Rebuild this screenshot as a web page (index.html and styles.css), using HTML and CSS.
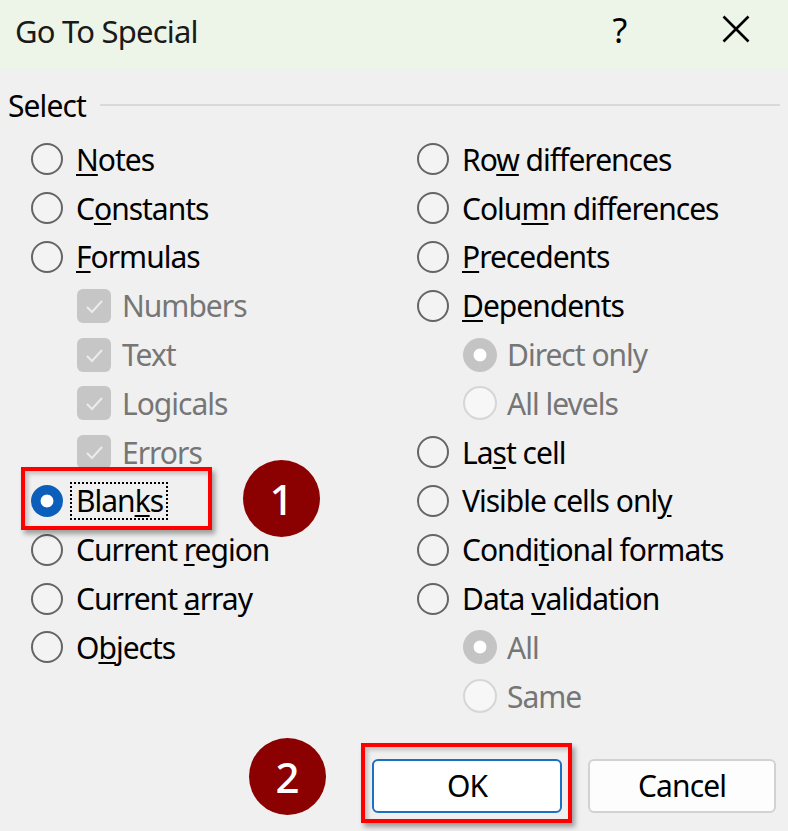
FILE: index.html
```html
<!DOCTYPE html>
<html lang="en">
<head>
<meta charset="utf-8">
<title>Go To Special</title>
<link rel="stylesheet" href="styles.css">
</head>
<body>
<div class="dialog">
  <div class="titlebar">
    <span class="title">Go To Special</span>
    <span class="help">?</span>
    <svg class="close" width="28" height="28" viewBox="0 0 28 28"><path d="M1.5 1.5 L26.5 26.5 M26.5 1.5 L1.5 26.5" stroke="#000" stroke-width="2.6" fill="none"/></svg>
  </div>
  <div class="content">
    <div class="group-head"><span>Select</span><div class="rule"></div></div>
    <div class="columns">
      <div class="col left">
        <div class="row"><span class="radio"></span><span><u>N</u>otes</span></div>
        <div class="row"><span class="radio"></span><span>C<u>o</u>nstants</span></div>
        <div class="row"><span class="radio"></span><span><u>F</u>ormulas</span></div>
        <div class="row sub dis"><span class="check"><svg width="34" height="34" viewBox="0 0 34 34"><path d="M10 18 L15 23 L25 12" stroke="#ececec" stroke-width="2" fill="none"/></svg></span><span>Numbers</span></div>
        <div class="row sub dis"><span class="check"><svg width="34" height="34" viewBox="0 0 34 34"><path d="M10 18 L15 23 L25 12" stroke="#ececec" stroke-width="2" fill="none"/></svg></span><span>Text</span></div>
        <div class="row sub dis"><span class="check"><svg width="34" height="34" viewBox="0 0 34 34"><path d="M10 18 L15 23 L25 12" stroke="#ececec" stroke-width="2" fill="none"/></svg></span><span>Logicals</span></div>
        <div class="row sub dis"><span class="check"><svg width="34" height="34" viewBox="0 0 34 34"><path d="M10 18 L15 23 L25 12" stroke="#ececec" stroke-width="2" fill="none"/></svg></span><span>Errors</span></div>
        <div class="row"><span class="radio on"></span><span class="focus">Blan<u>k</u>s</span></div>
        <div class="row"><span class="radio"></span><span>Current <u>r</u>egion</span></div>
        <div class="row"><span class="radio"></span><span>Current <u>a</u>rray</span></div>
        <div class="row"><span class="radio"></span><span>O<u>b</u>jects</span></div>
      </div>
      <div class="col right">
        <div class="row"><span class="radio"></span><span>Ro<u>w</u> differences</span></div>
        <div class="row"><span class="radio"></span><span>Colu<u>m</u>n differences</span></div>
        <div class="row"><span class="radio"></span><span><u>P</u>recedents</span></div>
        <div class="row"><span class="radio"></span><span><u>D</u>ependents</span></div>
        <div class="row sub dis"><span class="radio dis-on"></span><span>Direct only</span></div>
        <div class="row sub dis"><span class="radio dis-off"></span><span>All levels</span></div>
        <div class="row"><span class="radio"></span><span>La<u>s</u>t cell</span></div>
        <div class="row"><span class="radio"></span><span>Visible cells onl<u>y</u></span></div>
        <div class="row"><span class="radio"></span><span>Condi<u>t</u>ional formats</span></div>
        <div class="row"><span class="radio"></span><span>Data <u>v</u>alidation</span></div>
        <div class="row sub dis"><span class="radio dis-on"></span><span>All</span></div>
        <div class="row sub dis"><span class="radio dis-off"></span><span>Same</span></div>
      </div>
    </div>
    <div class="buttons">
      <div class="btn primary">OK</div>
      <div class="btn cancel">Cancel</div>
    </div>
  </div>
  <div class="hl hl-blanks"></div>
  <div class="hl hl-ok"></div>
  <div class="badge badge-1">1</div>
  <div class="badge badge-2">2</div>
</div>
</body>
</html>
```

FILE: styles.css
```css
* { box-sizing: border-box; }

body {
  margin: 0;
  background: #f0f0f0;
  font-family: "Noto Sans", "Open Sans", sans-serif;
  color: #000;
}

.dialog {
  position: relative;
  width: 788px;
  height: 831px;
  overflow: hidden;
}

.titlebar {
  height: 70px;
  background: #edf5e8;
  display: flex;
  align-items: center;
  padding-left: 15px;
}

.title {
  flex: 1;
  font-size: 31px;
  letter-spacing: -0.8px;
  line-height: 1;
  margin-top: -8px;
  color: #1a1a1a;
}

.help {
  width: 16px;
  text-align: center;
  font-size: 34px;
  line-height: 1;
  margin-top: -10px;
}

.close {
  margin-left: 94px;
  margin-right: 38px;
  margin-top: -13px;
  flex: none;
}

.content {
  padding-top: 15px;
}

.group-head {
  display: flex;
  align-items: center;
  height: 40px;
  padding-left: 8px;
  font-size: 30px;
  letter-spacing: -0.9px;
}

.group-head .rule {
  flex: 1;
  height: 2px;
  background: #d9d9d9;
  margin-left: 14px;
  margin-right: 8px;
}

.columns {
  display: flex;
  margin-top: 10px;
}

.col.left {
  width: 417px;
  padding-left: 31px;
}

.col.right {
  flex: 1;
}

.row {
  display: flex;
  align-items: center;
  height: 48.8px;
  font-size: 30px;
  letter-spacing: -1px;
  white-space: nowrap;
}

.row.sub {
  padding-left: 46px;
}

.row.dis {
  color: #767676;
}

u {
  text-decoration-thickness: 2px;
  text-underline-offset: 3px;
}

.radio {
  flex: none;
  width: 32px;
  height: 32px;
  border-radius: 50%;
  border: 2.5px solid #656565;
  background: #f3f3f3;
  margin-right: 13px;
}

.radio.on {
  border: none;
  background: radial-gradient(circle, #ffffff 0 6px, #0b5fba 6.8px);
}

.radio.dis-on {
  width: 34px;
  height: 34px;
  border: none;
  background: radial-gradient(circle, #ffffff 0 6px, #c4c4c4 6.8px);
  margin-right: 10px;
}

.radio.dis-off {
  width: 34px;
  height: 34px;
  border: 2px solid #d6d6d6;
  background: #f7f7f7;
  margin-right: 10px;
}

.check {
  flex: none;
  width: 34px;
  height: 34px;
  border-radius: 6px;
  background: #c6c6c6;
  margin-right: 11px;
  display: flex;
}

.focus {
  display: inline-flex;
  align-items: center;
  height: 38px;
  border: 2px dotted #000;
  padding: 0 3px 0 4px;
  margin-left: -6px;
}

.buttons {
  display: flex;
  justify-content: flex-end;
  gap: 26px;
  padding-right: 12px;
  margin-top: 38px;
}

.btn {
  height: 54px;
  border-radius: 6px;
  background: #fdfdfd;
  border: 2px solid #d2d2d2;
  font-size: 30px;
  letter-spacing: -0.9px;
  display: flex;
  align-items: center;
  justify-content: center;
}

.btn.primary {
  width: 190px;
  border-color: #1c6fc3;
  background: #ffffff;
}

.btn.cancel {
  width: 188px;
}

.hl {
  position: absolute;
  border: 4px solid #ff0000;
  box-shadow: 3px 4px 5px rgba(0, 0, 0, 0.35), inset 3px 3px 4px rgba(0, 0, 0, 0.2);
}

.hl-blanks {
  left: 21px;
  top: 467px;
  width: 191px;
  height: 63px;
}

.hl-ok {
  left: 361px;
  top: 743px;
  width: 211px;
  height: 80px;
}

.badge {
  position: absolute;
  width: 77px;
  height: 77px;
  border-radius: 50%;
  background: #8b0000;
  color: #ffffff;
  font-size: 42px;
  font-weight: 500;
  line-height: 1;
  display: flex;
  align-items: center;
  justify-content: center;
}

.badge-1 {
  left: 243px;
  top: 460px;
}

.badge-2 {
  left: 249px;
  top: 738px;
}
```
